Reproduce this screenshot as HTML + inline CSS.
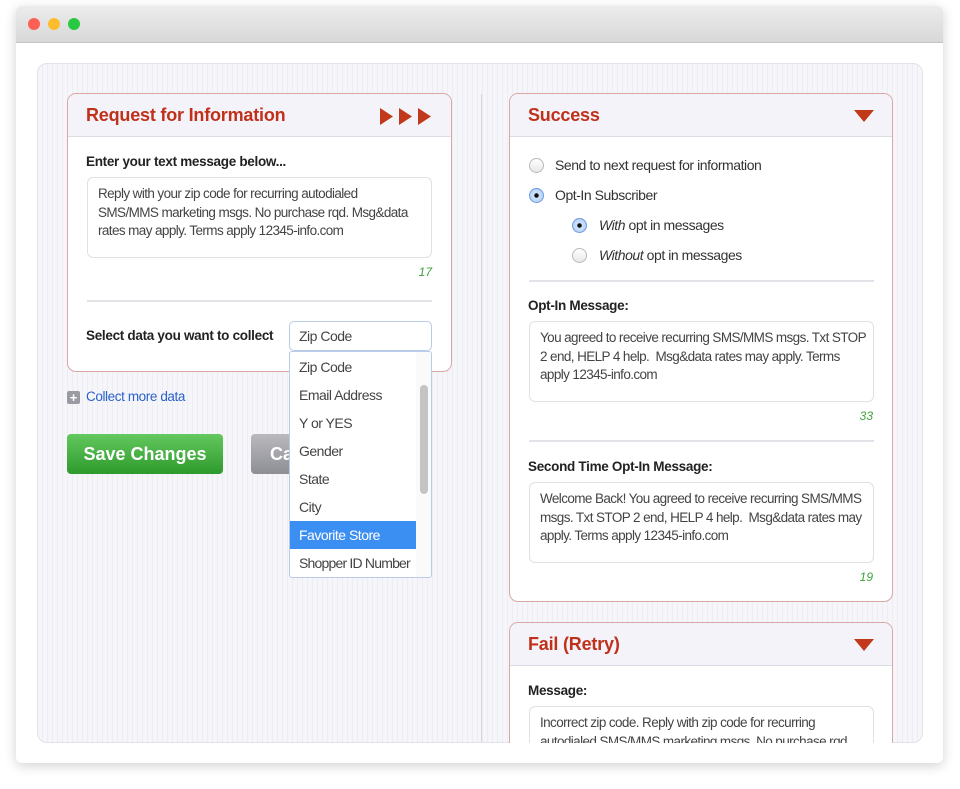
<!DOCTYPE html>
<html><head><meta charset="utf-8"><style>
*{margin:0;padding:0;box-sizing:border-box}
body{width:960px;height:789px;background:#fff;font-family:"Liberation Sans",sans-serif;position:relative;overflow:hidden}
.a{position:absolute}
.win{left:16px;top:6px;width:927px;height:757px;background:#fff;border-radius:6px;box-shadow:0 3px 12px rgba(0,0,0,.18);overflow:hidden}
.bar{left:0;top:0;width:927px;height:37px;background:linear-gradient(#ececec,#d8d8d8);border-bottom:1px solid #c4c4c4}
.dot{width:12px;height:12px;border-radius:50%;top:12px}
.panel{left:37px;top:63px;width:886px;height:680px;border:1px solid #e2e2ea;border-radius:10px;overflow:hidden;
background:repeating-linear-gradient(90deg,#f6f6fa 0 4px,#ededf4 4px 5px)}
.card{background:#fff;border:1px solid #d9a8a5;border-radius:9px;overflow:hidden}
.hd{left:0;top:0;right:0;height:43px;background:#f4f3f9;border-bottom:1px solid #dcdce4}
.ttl{color:#c0311a;font-weight:bold;font-size:18px;top:11px;left:18px;letter-spacing:-.2px}
.lbl{font-weight:bold;font-size:13.5px;color:#222;letter-spacing:-.3px}
.ta{border:1px solid #e0e0e6;border-radius:6px;background:#fff;padding:7px 10px;font-size:13.5px;line-height:18.5px;color:#444;letter-spacing:-.6px;white-space:nowrap}
.cnt{color:#3aa33a;font-style:italic;font-size:12px}
.hr{height:2px;background:#e2e2e8}
.t{font-size:14px;color:#333;letter-spacing:-.45px}
.rad{width:15px;height:15px;border-radius:50%;border:1px solid #b9b9b9;background:linear-gradient(#fff,#e8e8e8)}
.rad.on{border-color:#6b9ce0;background:radial-gradient(circle,#111 0 2px,#cfe2fb 2.5px,#a9c8f3 100%)}
.it{left:0;width:126px;height:28px;padding-left:9px;line-height:28px;font-size:14px;color:#444;letter-spacing:-.5px;white-space:nowrap}
</style></head><body>
<div class="a win">
 <div class="a bar"></div>
 <div class="a dot" style="left:12px;background:#fd5f57"></div>
 <div class="a dot" style="left:32px;background:#fdbc2e"></div>
 <div class="a dot" style="left:52px;background:#28c840"></div>
</div>
<div class="a panel">
 <div class="a" style="left:443px;top:30px;width:1px;height:650px;background:#d6d6de"></div>
</div>

<div class="a card" style="left:67px;top:93px;width:385px;height:279px">
 <div class="a hd"></div>
 <div class="a ttl">Request for Information</div>
 <svg class="a" style="left:311px;top:13px" width="54" height="19"><path d="M1 1L14 9.5L1 18Z M20 1L33 9.5L20 18Z M39 1L52 9.5L39 18Z" fill="#c0391a"/></svg>
 <div class="a lbl" style="left:18px;top:60px">Enter your text message below...</div>
 <div class="a ta" style="left:19px;top:83px;width:345px;height:81px">Reply with your zip code for recurring autodialed<br>SMS/MMS marketing msgs. No purchase rqd. Msg&amp;data<br>rates may apply. Terms apply 12345-info.com</div>
 <div class="a cnt" style="right:19px;top:171px">17</div>
 <div class="a hr" style="left:19px;top:206px;width:345px"></div>
 <div class="a lbl" style="left:18px;top:234px">Select data you want to collect</div>
</div>
<div class="a" style="left:289px;top:321px;width:143px;height:30px;border:1px solid #b9cbe6;border-radius:5px;background:#fff;padding-left:9px;line-height:28px;font-size:14px;color:#444;letter-spacing:-.5px">Zip Code</div>

<div class="a" style="left:67px;top:391px;width:13px;height:13px;background:#9a9aa2;border-radius:2px;color:#fff;font-size:13px;font-weight:bold;line-height:13px;text-align:center">+</div>
<div class="a" style="left:86px;top:389px;font-size:13.5px;color:#2a62c9;letter-spacing:-.4px">Collect more data</div>

<div class="a" style="left:251px;top:434px;width:80px;height:40px;border-radius:4px;background:linear-gradient(#b9b9be,#8e8e95);color:#fff;font-weight:bold;font-size:18px;line-height:40px;padding-left:19px">Ca</div>
<div class="a" style="left:67px;top:434px;width:156px;height:40px;border-radius:4px;background:linear-gradient(#63c85e,#2e9a2c);color:#fff;font-weight:bold;font-size:18px;line-height:40px;text-align:center">Save Changes</div>

<div class="a" style="left:289px;top:351px;width:143px;height:227px;border:1px solid #b9cbe6;border-radius:3px;background:#fff;overflow:hidden">
 <div class="a it" style="top:1px">Zip Code</div>
 <div class="a it" style="top:29px">Email Address</div>
 <div class="a it" style="top:57px">Y or YES</div>
 <div class="a it" style="top:85px">Gender</div>
 <div class="a it" style="top:113px">State</div>
 <div class="a it" style="top:141px">City</div>
 <div class="a it" style="top:169px;background:#3b8ff2;color:#fff">Favorite Store</div>
 <div class="a" style="left:126px;top:0;width:15px;height:227px;background:#fafafa"></div>
 <div class="a" style="left:130px;top:33px;width:8px;height:109px;background:#c4c4c4;border-radius:4px"></div>
 <div class="a it" style="top:197px;width:141px;letter-spacing:-.8px">Shopper ID Number</div>
</div>

<div class="a card" style="left:509px;top:93px;width:384px;height:509px">
 <div class="a hd"></div>
 <div class="a ttl">Success</div>
 <svg class="a" style="left:343px;top:15px" width="22" height="14"><path d="M1 1H21L11 13Z" fill="#c0391a"/></svg>
 <div class="a rad" style="left:19px;top:64px"></div><div class="a t" style="left:45px;top:63px">Send to next request for information</div>
 <div class="a rad on" style="left:19px;top:94px"></div><div class="a t" style="left:45px;top:93px">Opt-In Subscriber</div>
 <div class="a rad on" style="left:62px;top:124px"></div><div class="a t" style="left:89px;top:123px"><i>With</i> opt in messages</div>
 <div class="a rad" style="left:62px;top:154px"></div><div class="a t" style="left:89px;top:153px"><i>Without</i> opt in messages</div>
 <div class="a hr" style="left:19px;top:186px;width:345px"></div>
 <div class="a lbl" style="left:18px;top:204px">Opt-In Message:</div>
 <div class="a ta" style="left:19px;top:227px;width:345px;height:81px">You agreed to receive recurring SMS/MMS msgs. Txt STOP<br>2 end, HELP 4 help.&nbsp; Msg&amp;data rates may apply. Terms<br>apply 12345-info.com</div>
 <div class="a cnt" style="right:19px;top:315px">33</div>
 <div class="a hr" style="left:19px;top:346px;width:345px"></div>
 <div class="a lbl" style="left:18px;top:365px">Second Time Opt-In Message:</div>
 <div class="a ta" style="left:19px;top:388px;width:345px;height:81px">Welcome Back! You agreed to receive recurring SMS/MMS<br>msgs. Txt STOP 2 end, HELP 4 help.&nbsp; Msg&amp;data rates may<br>apply. Terms apply 12345-info.com</div>
 <div class="a cnt" style="right:19px;top:476px">19</div>
</div>

<div class="a" style="left:509px;top:622px;width:384px;height:121px;overflow:hidden">
<div class="a card" style="left:0;top:0;width:384px;height:200px">
 <div class="a hd"></div>
 <div class="a ttl">Fail (Retry)</div>
 <svg class="a" style="left:343px;top:15px" width="22" height="14"><path d="M1 1H21L11 13Z" fill="#c0391a"/></svg>
 <div class="a lbl" style="left:18px;top:60px">Message:</div>
 <div class="a ta" style="left:19px;top:83px;width:345px;height:81px">Incorrect zip code. Reply with zip code for recurring<br>autodialed SMS/MMS marketing msgs. No purchase rqd.</div>
</div>
</div>
</body></html>
